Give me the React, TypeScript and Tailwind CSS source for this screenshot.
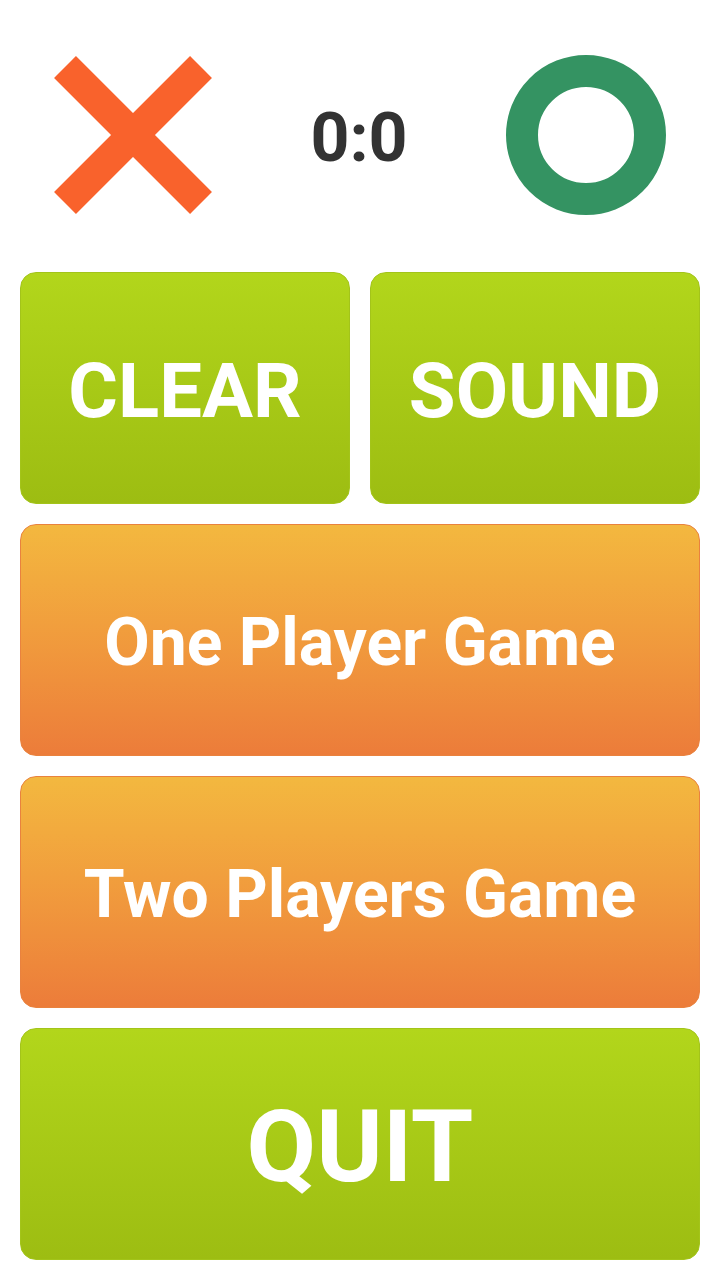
import React from "react";

const font = { fontFamily: "Roboto, 'Liberation Sans', sans-serif" };

function GreenBtn({ children, className = "" }: { children: React.ReactNode; className?: string }) {
  return (
    <div
      className={`flex items-center justify-center rounded-[16px] border border-[#a3c41a] bg-gradient-to-b from-[#b2d61b] to-[#9dbd12] pt-[6px] text-white font-bold ${className}`}
    >
      {children}
    </div>
  );
}

function OrangeBtn({ children }: { children: React.ReactNode }) {
  return (
    <div className="flex h-[232px] items-center justify-center rounded-[16px] border border-[#e9823e] bg-gradient-to-b from-[#f3b83f] to-[#ec7c3a] pt-[4px] text-[66px] font-bold text-white">
      {children}
    </div>
  );
}

export default function App() {
  return (
    <div className="flex h-[1280px] w-[720px] flex-col bg-white" style={font}>
      <div className="flex h-[272px] items-center justify-between px-[54px] pb-[2px]">
        <svg width="158" height="158" viewBox="0 0 158 158">
          <line x1="11" y1="11" x2="147" y2="147" stroke="#f9622c" strokeWidth="31" />
          <line x1="147" y1="11" x2="11" y2="147" stroke="#f9622c" strokeWidth="31" />
        </svg>
        <div className="pt-[6px] text-[68px] font-bold leading-none text-[#333333]">0:0</div>
        <svg width="160" height="160" viewBox="0 0 160 160">
          <circle cx="80" cy="80" r="64" fill="none" stroke="#349362" strokeWidth="32" />
        </svg>
      </div>
      <div className="flex flex-col gap-[20px] px-[20px]">
        <div className="flex gap-[20px]">
          <GreenBtn className="h-[232px] flex-1 text-[76px]">CLEAR</GreenBtn>
          <GreenBtn className="h-[232px] flex-1 text-[76px]">SOUND</GreenBtn>
        </div>
        <OrangeBtn>One Player Game</OrangeBtn>
        <OrangeBtn>Two Players Game</OrangeBtn>
        <GreenBtn className="h-[232px] text-[101px]">QUIT</GreenBtn>
      </div>
    </div>
  );
}
